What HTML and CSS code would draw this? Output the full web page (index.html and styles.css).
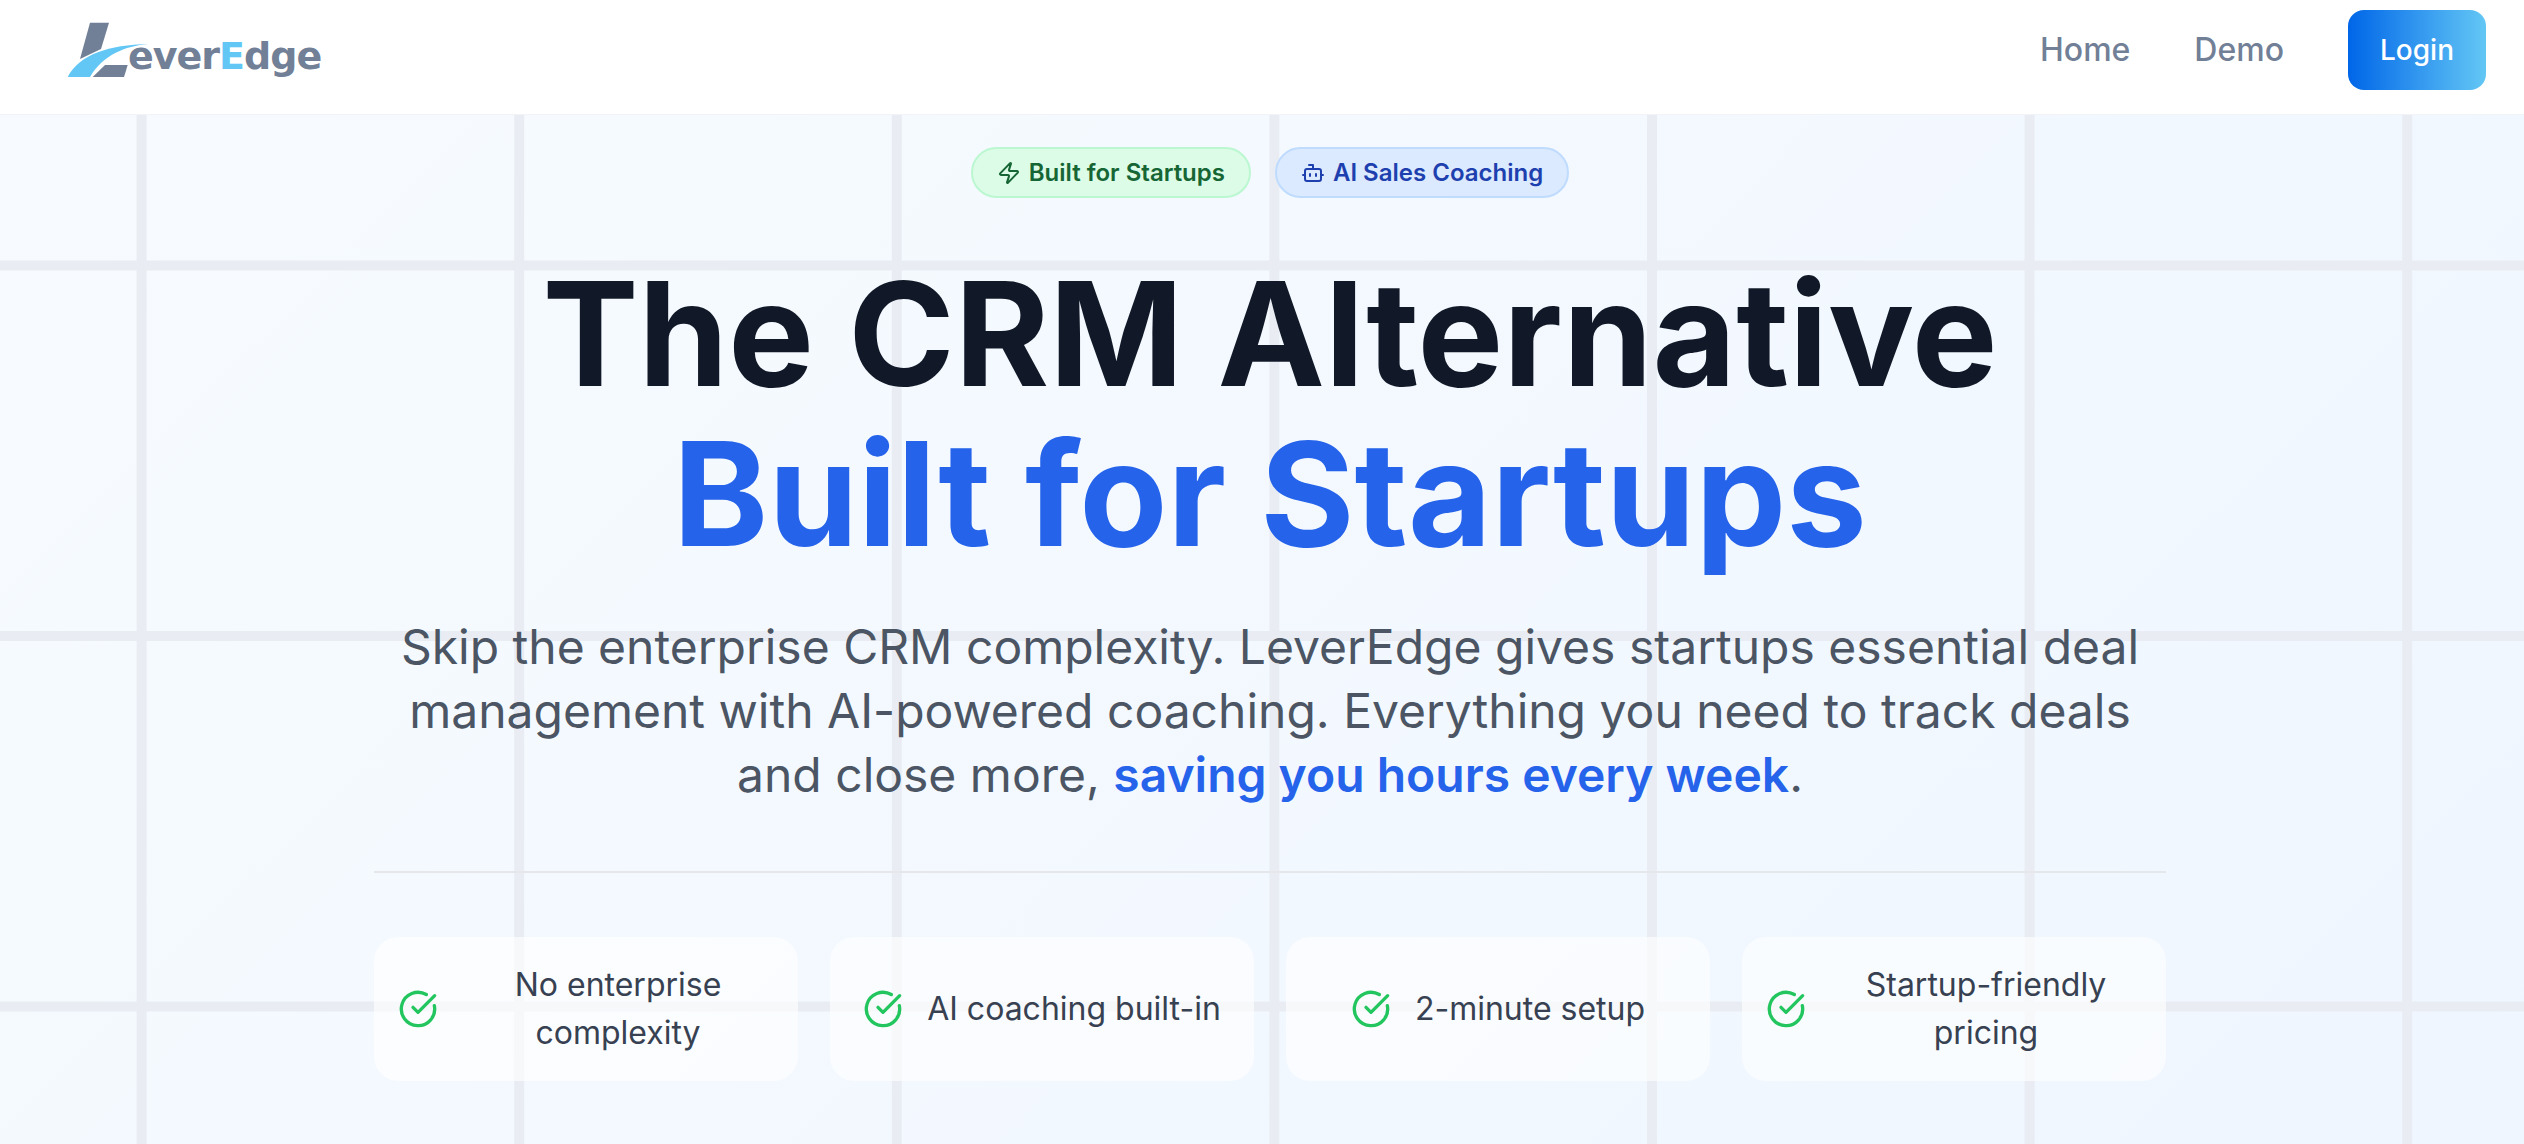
FILE: index.html
```html
<!DOCTYPE html>
<html lang="en">
<head>
	<meta charset="utf-8">
	<meta name="viewport" content="width=device-width,initial-scale=1">
	<title>LeverEdge</title>
	<link rel="stylesheet" href="styles.css">
</head>
<body>
	<header class="topbar">
		<a href="#" class="logo">
			<svg class="logo_mark" viewBox="0 0 84 56" aria-hidden="true">
				<path d="M23 .7H42L34 27L13 37Z" fill="#718096"/>
				<path d="M38 43H60.700L57 55H25.700Z" fill="#718096"/>
				<path d="M.7 55C13 32 42 23 81.300 22C58 24 36 33 23 55Z" fill="#63c7f5"/>
			</svg>
			<span class="logo_text">ever<em>E</em>dge</span>
		</a>
		<nav class="nav">
			<a href="#">Home</a>
			<a href="#">Demo</a>
			<a href="#" class="btn_login">Login</a>
		</nav>
	</header>

	<main class="hero">
		<div class="badges">
			<span class="badge badge_green">
				<svg viewBox="0 0 24 24"><path d="M4 14a1 1 0 0 1-.78-1.63l9.9-10.2a.5.5 0 0 1 .86.46l-1.92 6.02A1 1 0 0 0 13 10h7a1 1 0 0 1 .78 1.63l-9.9 10.2a.5.5 0 0 1-.86-.46l1.92-6.02A1 1 0 0 0 11 14z"/></svg>
				Built for Startups
			</span>
			<span class="badge badge_blue">
				<svg viewBox="0 0 24 24"><path d="M12 8V4H8"/><rect width="16" height="12" x="4" y="8" rx="2"/><path d="M2 14h2"/><path d="M20 14h2"/><path d="M15 13v2"/><path d="M9 13v2"/></svg>
				AI Sales Coaching
			</span>
		</div>

		<h1 class="title"><span>The CRM Alternative</span><span class="title_blue">Built for Startups</span></h1>

		<p class="lead">Skip the enterprise CRM complexity. LeverEdge gives startups essential deal management with AI-powered coaching. Everything you need to track deals and close more, <strong>saving you hours every week</strong>.</p>

		<div class="features">
			<div class="feature">
				<svg viewBox="0 0 24 24"><path d="M21.801 10A10 10 0 1 1 17 3.335"/><path d="m9 11 3 3L22 4"/></svg>
				<span>No enterprise complexity</span>
			</div>
			<div class="feature">
				<svg viewBox="0 0 24 24"><path d="M21.801 10A10 10 0 1 1 17 3.335"/><path d="m9 11 3 3L22 4"/></svg>
				<span>AI coaching built-in</span>
			</div>
			<div class="feature">
				<svg viewBox="0 0 24 24"><path d="M21.801 10A10 10 0 1 1 17 3.335"/><path d="m9 11 3 3L22 4"/></svg>
				<span>2-minute setup</span>
			</div>
			<div class="feature">
				<svg viewBox="0 0 24 24"><path d="M21.801 10A10 10 0 1 1 17 3.335"/><path d="m9 11 3 3L22 4"/></svg>
				<span>Startup-friendly pricing</span>
			</div>
		</div>
	</main>
</body>
</html>
```

FILE: styles.css
```css
*{margin:0;padding:0;box-sizing:border-box;}
html,body{height:100%;overflow:hidden;}
body{display:flex;flex-direction:column;background:#fff;font-family:Inter,"Liberation Sans",sans-serif;}
a{text-decoration:none;}

.topbar{flex:none;height:115px;display:flex;align-items:center;justify-content:space-between;padding:0 38px 15px 67px;background:#fff;border-bottom:1px solid #f1f3f6;}
.logo{display:flex;align-items:flex-end;}
.logo_mark{width:84px;height:56px;flex:none;}
.logo_text{margin-left:-23px;font-family:"DejaVu Sans",Inter,sans-serif;font-size:38px;line-height:44px;font-weight:700;color:#718096;letter-spacing:-1px;}
.logo_text em{font-style:normal;color:#63c7f5;}
.nav{display:flex;align-items:center;gap:64px;font-size:32px;font-weight:500;}
.nav a{color:#718096;}
.nav .btn_login{display:block;width:138px;height:80px;line-height:80px;text-align:center;font-size:28px;color:#fff;border-radius:16px;background:linear-gradient(90deg,#0066e8,#63c7f5);}

.hero{flex:1;display:flex;flex-direction:column;align-items:center;padding:32px 0 0 16px;
	background-color:#f5f8fe;
	background-image:
		linear-gradient(90deg,transparent 368.100px,#e9edf3 368.100px,#e9edf3 377.600px),
		linear-gradient(180deg,transparent 361px,#e9edf3 361px,#e9edf3 370.500px),
		linear-gradient(135deg,#f7fbff,#eff6ff);
	background-size:377.600px 100%,100% 370.500px,100% 100%;
	background-position:-231px 0,0 -215px,0 0;
}

.badges{display:flex;gap:24px;}
.badge{display:flex;align-items:center;gap:8px;height:51px;padding:0 24px;border:2px solid;border-radius:26px;font-size:24px;font-weight:600;}
.badge svg{width:24px;height:24px;fill:none;stroke:currentColor;stroke-width:2;stroke-linecap:round;stroke-linejoin:round;}
.badge_green{background:#dcfce7;border-color:#bbf7d0;color:#166534;}
.badge_blue{background:#dbeafe;border-color:#bfdbfe;color:#1e40af;}

.title{margin-top:56px;font-size:144px;line-height:160px;font-weight:700;text-align:center;color:#111827;}
.title span{display:block;}
.title .title_blue{color:#2563eb;}

.lead{width:1792px;margin-top:41px;font-size:48px;line-height:64px;text-align:center;color:#4b5563;}
.lead strong{font-weight:600;color:#2563eb;}

.features{width:1792px;margin-top:64px;padding-top:64px;border-top:2px solid #e5e7eb;display:grid;grid-template-columns:repeat(4,1fr);gap:32px;}
.feature{display:flex;align-items:center;justify-content:center;gap:24px;height:144px;padding:24px;border-radius:24px;background:rgba(255,255,255,0.6);font-size:32px;line-height:48px;text-align:center;color:#374151;}
.feature svg{flex:none;width:40px;height:40px;fill:none;stroke:#22c55e;stroke-width:2;stroke-linecap:round;stroke-linejoin:round;}
```
